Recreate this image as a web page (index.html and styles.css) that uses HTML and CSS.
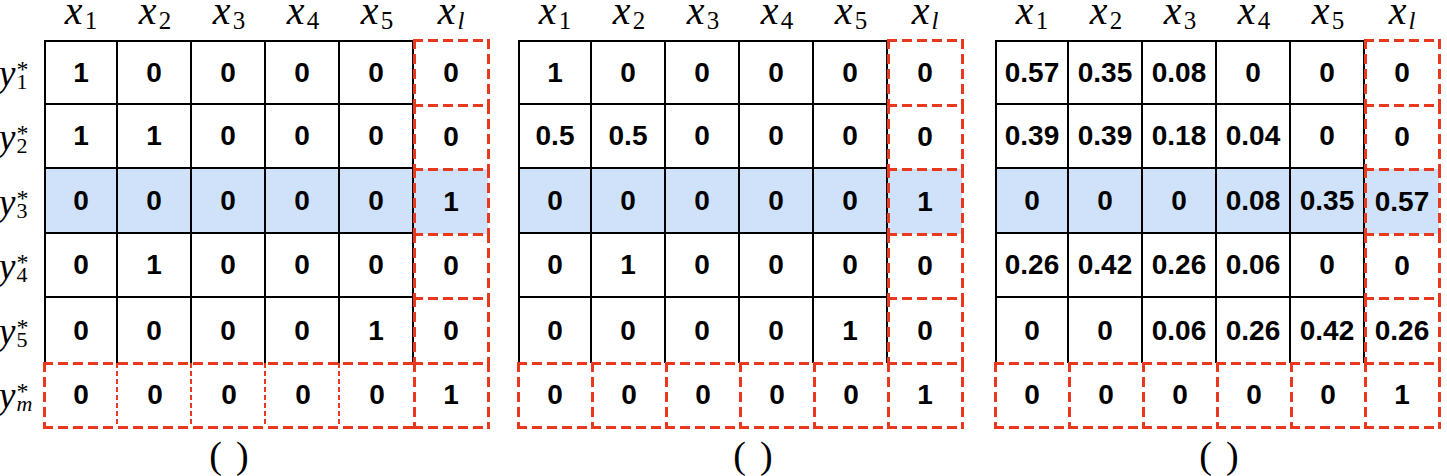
FILE: index.html
```html
<!DOCTYPE html>
<html>
<head>
<meta charset="utf-8">
<link rel="stylesheet" href="styles.css">
</head>
<body>
<div class="figure">
  <div class="labels">
    <div class="lab"><i>y</i><span class="ss"><span class="sp">*</span><span class="sb">1</span></span></div>
    <div class="lab"><i>y</i><span class="ss"><span class="sp">*</span><span class="sb">2</span></span></div>
    <div class="lab"><i>y</i><span class="ss"><span class="sp">*</span><span class="sb">3</span></span></div>
    <div class="lab"><i>y</i><span class="ss"><span class="sp">*</span><span class="sb">4</span></span></div>
    <div class="lab"><i>y</i><span class="ss"><span class="sp">*</span><span class="sb">5</span></span></div>
    <div class="lab"><i>y</i><span class="ss"><span class="sp">*</span><span class="sb it">m</span></span></div>
  </div>

  <div class="panel panel-1">
    <div class="heads">
      <div class="hc"><i>x</i><sub>1</sub></div>
      <div class="hc"><i>x</i><sub>2</sub></div>
      <div class="hc"><i>x</i><sub>3</sub></div>
      <div class="hc"><i>x</i><sub>4</sub></div>
      <div class="hc"><i>x</i><sub>5</sub></div>
      <div class="hc"><i>x</i><sub class="it">l</sub></div>
    </div>
    <div class="table">
      <div class="c s t l">1</div><div class="c s t">0</div><div class="c s t">0</div><div class="c s t">0</div><div class="c s t">0</div><div class="c b">0</div>
      <div class="c s l">1</div><div class="c s">1</div><div class="c s">0</div><div class="c s">0</div><div class="c s">0</div><div class="c b">0</div>
      <div class="c s l hl">0</div><div class="c s hl">0</div><div class="c s hl">0</div><div class="c s hl">0</div><div class="c s hl">0</div><div class="c b hl">1</div>
      <div class="c s l">0</div><div class="c s">1</div><div class="c s">0</div><div class="c s">0</div><div class="c s">0</div><div class="c b">0</div>
      <div class="c s l e">0</div><div class="c s e">0</div><div class="c s e">0</div><div class="c s e">0</div><div class="c s e">1</div><div class="c b">0</div>
      <div class="mrow b"><div class="c d">0</div><div class="c d">0</div><div class="c d">0</div><div class="c d">0</div><div class="c d">0</div></div><div class="c b">1</div>
    </div>
    <div class="cap cap-1"><span>(</span><span>)</span></div>
  </div>

  <div class="panel panel-2">
    <div class="heads">
      <div class="hc"><i>x</i><sub>1</sub></div>
      <div class="hc"><i>x</i><sub>2</sub></div>
      <div class="hc"><i>x</i><sub>3</sub></div>
      <div class="hc"><i>x</i><sub>4</sub></div>
      <div class="hc"><i>x</i><sub>5</sub></div>
      <div class="hc"><i>x</i><sub class="it">l</sub></div>
    </div>
    <div class="table">
      <div class="c s t l">1</div><div class="c s t">0</div><div class="c s t">0</div><div class="c s t">0</div><div class="c s t">0</div><div class="c b">0</div>
      <div class="c s l">0.5</div><div class="c s">0.5</div><div class="c s">0</div><div class="c s">0</div><div class="c s">0</div><div class="c b">0</div>
      <div class="c s l hl">0</div><div class="c s hl">0</div><div class="c s hl">0</div><div class="c s hl">0</div><div class="c s hl">0</div><div class="c b hl">1</div>
      <div class="c s l">0</div><div class="c s">1</div><div class="c s">0</div><div class="c s">0</div><div class="c s">0</div><div class="c b">0</div>
      <div class="c s l e">0</div><div class="c s e">0</div><div class="c s e">0</div><div class="c s e">0</div><div class="c s e">1</div><div class="c b">0</div>
      <div class="c b">0</div><div class="c b">0</div><div class="c b">0</div><div class="c b">0</div><div class="c b">0</div><div class="c b">1</div>
    </div>
    <div class="cap cap-2"><span>(</span><span>)</span></div>
  </div>

  <div class="panel panel-3">
    <div class="heads">
      <div class="hc"><i>x</i><sub>1</sub></div>
      <div class="hc"><i>x</i><sub>2</sub></div>
      <div class="hc"><i>x</i><sub>3</sub></div>
      <div class="hc"><i>x</i><sub>4</sub></div>
      <div class="hc"><i>x</i><sub>5</sub></div>
      <div class="hc"><i>x</i><sub class="it">l</sub></div>
    </div>
    <div class="table">
      <div class="c s t l">0.57</div><div class="c s t">0.35</div><div class="c s t">0.08</div><div class="c s t">0</div><div class="c s t">0</div><div class="c b">0</div>
      <div class="c s l">0.39</div><div class="c s">0.39</div><div class="c s">0.18</div><div class="c s">0.04</div><div class="c s">0</div><div class="c b">0</div>
      <div class="c s l hl">0</div><div class="c s hl">0</div><div class="c s hl">0</div><div class="c s hl">0.08</div><div class="c s hl">0.35</div><div class="c b hl">0.57</div>
      <div class="c s l">0.26</div><div class="c s">0.42</div><div class="c s">0.26</div><div class="c s">0.06</div><div class="c s">0</div><div class="c b">0</div>
      <div class="c s l e">0</div><div class="c s e">0</div><div class="c s e">0.06</div><div class="c s e">0.26</div><div class="c s e">0.42</div><div class="c b">0.26</div>
      <div class="c b">0</div><div class="c b">0</div><div class="c b">0</div><div class="c b">0</div><div class="c b">0</div><div class="c b">1</div>
    </div>
    <div class="cap cap-3"><span>(</span><span>)</span></div>
  </div>
</div>
</body>
</html>
```
FILE: styles.css
```css
* { box-sizing: border-box; }
html, body { margin: 0; padding: 0; background: #fff; }
body {
  width: 1447px;
  height: 476px;
  overflow: hidden;
  color: #000;
  font-family: "Liberation Sans", Arial, sans-serif;
  --red: #e8381e;
  --blue: #cfe2f9;
}
.figure { display: flex; align-items: flex-start; }

/* row labels */
.labels {
  width: 44px;
  padding-top: 40px;
  display: grid;
  grid-template-rows: 65px 64px 65px 64px 65px 64px;
}
.lab {
  font-family: "Liberation Serif", "Times New Roman", serif;
  display: flex;
  align-items: center;
  padding-top: 2px;
}
.lab i {
  font-style: italic;
  font-size: 37px;
  line-height: 36px;
  margin-left: -1px;
}
.ss {
  display: flex;
  flex-direction: column;
  align-items: flex-start;
  font-size: 22px;
  margin-left: 1px;
}
.sp { line-height: 16px; height: 16px; font-size: 24px; padding-top: 4px; }
.sb { line-height: 18px; height: 18px; }
.sb.it, .hc sub.it { font-style: italic; }

/* panels */
.panel { display: flex; flex-direction: column; }
.panel-2 { margin-left: 30px; }
.panel-3 { margin-left: 33px; }

.heads {
  display: grid;
  grid-template-columns: repeat(6, 74px);
  height: 40px;
}
.hc {
  text-align: center;
  font-family: "Liberation Serif", "Times New Roman", serif;
  font-size: 40px;
  line-height: 22px;
  height: 40px;
}
.hc i { font-style: italic; }
.hc sub {
  font-size: 25px;
  line-height: 0;
  vertical-align: -5px;
  margin-left: 2px;
}

.table {
  display: grid;
  grid-template-columns: repeat(6, 74px);
  grid-template-rows: 65px 64px 65px 64px 65px 64px;
}
.c {
  display: flex;
  align-items: center;
  justify-content: center;
  font-weight: bold;
  font-size: 28px;
  line-height: 1;
}
.s {
  border-right: 2px solid #000;
  border-bottom: 2px solid #000;
}
.s.t { border-top: 2px solid #000; }
.s.l { border-left: 2px solid #000; }
.s.e { border-bottom: 0; }
.hl { background: var(--blue); }

/* dashed red boxes */
.b { position: relative; }
.b::after {
  content: "";
  position: absolute;
  top: -1px;
  left: -1px;
  right: -2px;
  bottom: -2px;
  pointer-events: none;
  background:
    repeating-linear-gradient(90deg, var(--red) 0 10px, transparent 10px 15px) 0 0 / 100% 3px no-repeat,
    repeating-linear-gradient(90deg, var(--red) 0 10px, transparent 10px 15px) 0 100% / 100% 3px no-repeat,
    repeating-linear-gradient(180deg, var(--red) 0 10px, transparent 10px 15px) 0 0 / 3px 100% no-repeat,
    repeating-linear-gradient(180deg, var(--red) 0 10px, transparent 10px 15px) 100% 0 / 3px 100% no-repeat;
}
.mrow {
  grid-column: span 5;
  display: grid;
  grid-template-columns: repeat(5, 74px);
}
.d {
  background: repeating-linear-gradient(180deg, var(--red) 0 5px, transparent 5px 8px) 100% 0 / 2px 100% no-repeat;
}
.d:last-child { background: none; }

/* captions */
.cap {
  display: flex;
  justify-content: center;
  gap: 14px;
  font-family: "Liberation Serif", "Times New Roman", serif;
  font-size: 38px;
  line-height: 38px;
  margin-top: 9px;
}
.cap-1 { padding-right: 74px; }
.cap-2 { padding-left: 26px; }
.cap-3 { padding-left: 4px; }
```
